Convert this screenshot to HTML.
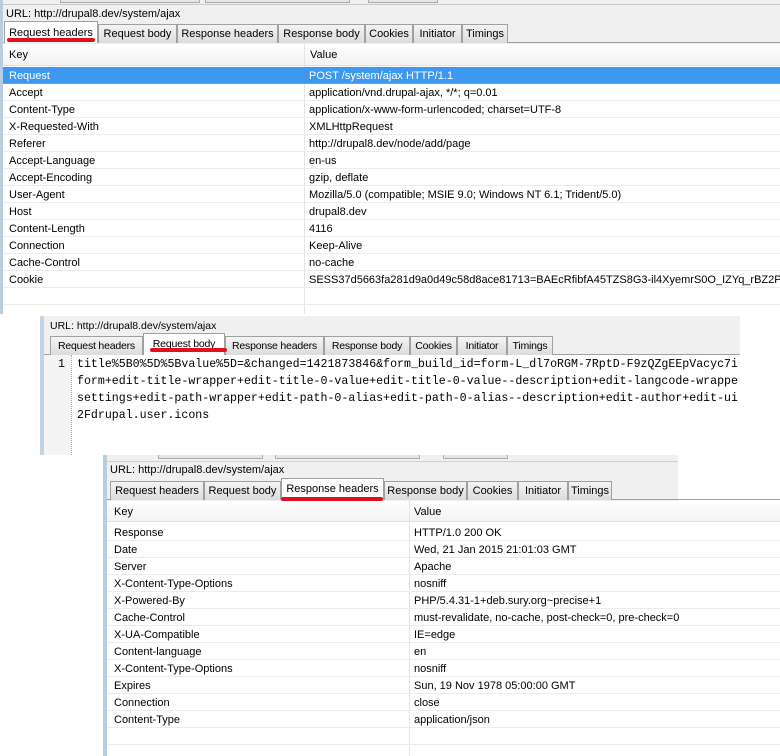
<!DOCTYPE html>
<html><head><meta charset="utf-8">
<style>
*{margin:0;padding:0;box-sizing:border-box}
body{width:780px;height:756px;background:#fff;position:relative;overflow:hidden;font-family:"Liberation Sans",sans-serif;font-size:11px;color:#000}
.a{position:absolute}
.panel{position:absolute;background:#fff;overflow:hidden}
.gray{position:absolute;background:#f0f0f0}
.url{position:absolute;font-size:11px;white-space:nowrap}
.tab{position:absolute;height:19px;border:1px solid #a0a0a0;border-bottom:none;background:linear-gradient(#f4f4f4,#dcdcdc);font-size:11px;line-height:18px;text-align:center;white-space:nowrap;overflow:hidden}
.tab.on{background:#fff;height:22px;border-color:#a0a0a0}
.p2 .tab{font-size:10.5px;letter-spacing:-0.2px}
.red{position:absolute;height:4px;background:#e01020;border-radius:2px}
.hdr{position:absolute;background:linear-gradient(#fff,#f3f3f3);border-bottom:1px solid #e2e2e2}
.row{position:absolute;left:0;right:0;height:17px;border-bottom:1px solid #ececec;line-height:18px;white-space:nowrap}
.row span{position:absolute}
.vl{position:absolute;width:1px;background:#e4e4e4}
.mono{font-family:"Liberation Mono",monospace;font-size:11.6px;line-height:17px;white-space:pre;position:absolute}
</style></head><body>

<!-- Panel 1 -->
<div class="panel" style="left:0;top:0;width:780px;height:314px">
  <div class="gray" style="left:0;top:0;width:780px;height:44px"></div>
  <div class="a" style="left:0;top:0;width:3px;height:314px;background:#b9cde0"></div>
  <div class="a" style="left:60px;top:0;width:140px;height:3px;border:1px solid #aaa;border-top:none;background:#e6e6e6"></div>
  <div class="a" style="left:205px;top:0;width:145px;height:3px;border:1px solid #aaa;border-top:none;background:#e6e6e6"></div>
  <div class="a" style="left:368px;top:0;width:70px;height:3px;border:1px solid #aaa;border-top:none;background:#e6e6e6"></div>
  <div class="a" style="left:0;top:4px;width:780px;height:1px;background:#c8c8c8"></div>
  <div class="url" style="left:6px;top:8px">URL: http://drupal8.dev/system/ajax</div>
  <div class="a" style="left:3px;top:42px;width:777px;height:1px;background:#a0a0a0"></div>
  <div class="tab" style="left:98px;top:24px;width:79px">Request body</div>
  <div class="tab" style="left:177px;top:24px;width:101px">Response headers</div>
  <div class="tab" style="left:278px;top:24px;width:87px">Response body</div>
  <div class="tab" style="left:365px;top:24px;width:48px">Cookies</div>
  <div class="tab" style="left:413px;top:24px;width:49px">Initiator</div>
  <div class="tab" style="left:462px;top:24px;width:46px">Timings</div>
  <div class="tab on" style="left:4px;top:21px;width:94px;line-height:22px">Request headers</div>
  <div class="red" style="left:7px;top:38px;width:88px"></div>
  <div class="hdr" style="left:3px;top:44px;width:777px;height:22px"></div>
  <div class="a" style="left:9px;top:49px">Key</div>
  <div class="a" style="left:310px;top:49px">Value</div>
  <div class="vl" style="left:304px;top:44px;height:270px"></div>
  <div class="a" style="left:3px;top:67px;width:777px;height:248px">
    <div class="row" style="top:0;background:#3d98f0;color:#fff;border-bottom:1px solid #6ab"><span style="left:6px">Request</span><span style="left:306px">POST /system/ajax HTTP/1.1</span></div>
    <div class="row" style="top:17px"><span style="left:6px">Accept</span><span style="left:306px">application/vnd.drupal-ajax, */*; q=0.01</span></div>
    <div class="row" style="top:34px"><span style="left:6px">Content-Type</span><span style="left:306px">application/x-www-form-urlencoded; charset=UTF-8</span></div>
    <div class="row" style="top:51px"><span style="left:6px">X-Requested-With</span><span style="left:306px">XMLHttpRequest</span></div>
    <div class="row" style="top:68px"><span style="left:6px">Referer</span><span style="left:306px">http://drupal8.dev/node/add/page</span></div>
    <div class="row" style="top:85px"><span style="left:6px">Accept-Language</span><span style="left:306px">en-us</span></div>
    <div class="row" style="top:102px"><span style="left:6px">Accept-Encoding</span><span style="left:306px">gzip, deflate</span></div>
    <div class="row" style="top:119px"><span style="left:6px">User-Agent</span><span style="left:306px">Mozilla/5.0 (compatible; MSIE 9.0; Windows NT 6.1; Trident/5.0)</span></div>
    <div class="row" style="top:136px"><span style="left:6px">Host</span><span style="left:306px">drupal8.dev</span></div>
    <div class="row" style="top:153px"><span style="left:6px">Content-Length</span><span style="left:306px">4116</span></div>
    <div class="row" style="top:170px"><span style="left:6px">Connection</span><span style="left:306px">Keep-Alive</span></div>
    <div class="row" style="top:187px"><span style="left:6px">Cache-Control</span><span style="left:306px">no-cache</span></div>
    <div class="row" style="top:204px"><span style="left:6px">Cookie</span><span style="left:306px">SESS37d5663fa281d9a0d49c58d8ace81713=BAEcRfibfA45TZS8G3-il4XyemrS0O_IZYq_rBZ2Pjw</span></div>
    <div class="row" style="top:221px"></div>
  </div>
</div>

<!-- Panel 2 -->
<div class="panel p2" style="left:40px;top:316px;width:700px;height:139px">
  <div class="gray" style="left:0;top:0;width:700px;height:39px"></div>
  <div class="a" style="left:0;top:0;width:4px;height:139px;background:#c3d3e3"></div>
  <div class="url" style="left:10px;top:4px;font-size:10.5px">URL: http://drupal8.dev/system/ajax</div>
  <div class="a" style="left:4px;top:38px;width:696px;height:1px;background:#a0a0a0"></div>
  <div class="tab" style="left:10px;top:20px;width:93px">Request headers</div>
  <div class="tab" style="left:185px;top:20px;width:99px">Response headers</div>
  <div class="tab" style="left:284px;top:20px;width:86px">Response body</div>
  <div class="tab" style="left:370px;top:20px;width:47px">Cookies</div>
  <div class="tab" style="left:417px;top:20px;width:50px">Initiator</div>
  <div class="tab" style="left:467px;top:20px;width:46px">Timings</div>
  <div class="tab on" style="left:103px;top:17px;width:82px;line-height:20px">Request body</div>
  <div class="red" style="left:110px;top:32px;width:77px"></div>
  <div class="a" style="left:4px;top:39px;width:27px;height:100px;background:#f4f4f4"></div>
  <div class="a" style="left:31px;top:39px;width:0;height:100px;border-left:1px dotted #aaa"></div>
  <div class="mono" style="left:18px;top:40px">1</div>
  <div class="mono" style="left:37px;top:40px">title%5B0%5D%5Bvalue%5D=&amp;changed=1421873846&amp;form_build_id=form-L_dl7oRGM-7RptD-F9zQZgEEpVacyc7i
form+edit-title-wrapper+edit-title-0-value+edit-title-0-value--description+edit-langcode-wrappe
settings+edit-path-wrapper+edit-path-0-alias+edit-path-0-alias--description+edit-author+edit-ui
2Fdrupal.user.icons</div>
</div>

<!-- Panel 3 -->
<div class="panel" style="left:103px;top:455px;width:677px;height:301px">
  <div class="gray" style="left:0;top:0;width:575px;height:46px"></div>
  <div class="a" style="left:0;top:0;width:4px;height:301px;background:#b9cde0"></div>
  <div class="a" style="left:55px;top:0;width:105px;height:4px;border:1px solid #aaa;border-top:none;background:#e6e6e6"></div>
  <div class="a" style="left:172px;top:0;width:145px;height:4px;border:1px solid #aaa;border-top:none;background:#e6e6e6"></div>
  <div class="a" style="left:340px;top:0;width:65px;height:4px;border:1px solid #aaa;border-top:none;background:#e6e6e6"></div>
  <div class="a" style="left:4px;top:6px;width:571px;height:1px;background:#d0d0d0"></div>
  <div class="url" style="left:7px;top:9px">URL: http://drupal8.dev/system/ajax</div>
  <div class="a" style="left:4px;top:44px;width:673px;height:1px;background:#a0a0a0"></div>
  <div class="tab" style="left:7px;top:26px;width:94px">Request headers</div>
  <div class="tab" style="left:101px;top:26px;width:77px">Request body</div>
  <div class="tab" style="left:281px;top:26px;width:83px">Response body</div>
  <div class="tab" style="left:364px;top:26px;width:51px">Cookies</div>
  <div class="tab" style="left:415px;top:26px;width:50px">Initiator</div>
  <div class="tab" style="left:465px;top:26px;width:44px">Timings</div>
  <div class="tab on" style="left:178px;top:23px;width:103px;line-height:20px">Response headers</div>
  <div class="red" style="left:178px;top:42px;width:102px"></div>
  <div class="hdr" style="left:4px;top:46px;width:673px;height:21px"></div>
  <div class="a" style="left:11px;top:51px">Key</div>
  <div class="a" style="left:311px;top:51px">Value</div>
  <div class="vl" style="left:306px;top:46px;height:255px"></div>
  <div class="a" style="left:4px;top:69px;width:673px;height:233px">
    <div class="row" style="top:0"><span style="left:7px">Response</span><span style="left:307px">HTTP/1.0 200 OK</span></div>
    <div class="row" style="top:17px"><span style="left:7px">Date</span><span style="left:307px">Wed, 21 Jan 2015 21:01:03 GMT</span></div>
    <div class="row" style="top:34px"><span style="left:7px">Server</span><span style="left:307px">Apache</span></div>
    <div class="row" style="top:51px"><span style="left:7px">X-Content-Type-Options</span><span style="left:307px">nosniff</span></div>
    <div class="row" style="top:68px"><span style="left:7px">X-Powered-By</span><span style="left:307px">PHP/5.4.31-1+deb.sury.org~precise+1</span></div>
    <div class="row" style="top:85px"><span style="left:7px">Cache-Control</span><span style="left:307px">must-revalidate, no-cache, post-check=0, pre-check=0</span></div>
    <div class="row" style="top:102px"><span style="left:7px">X-UA-Compatible</span><span style="left:307px">IE=edge</span></div>
    <div class="row" style="top:119px"><span style="left:7px">Content-language</span><span style="left:307px">en</span></div>
    <div class="row" style="top:136px"><span style="left:7px">X-Content-Type-Options</span><span style="left:307px">nosniff</span></div>
    <div class="row" style="top:153px"><span style="left:7px">Expires</span><span style="left:307px">Sun, 19 Nov 1978 05:00:00 GMT</span></div>
    <div class="row" style="top:170px"><span style="left:7px">Connection</span><span style="left:307px">close</span></div>
    <div class="row" style="top:187px"><span style="left:7px">Content-Type</span><span style="left:307px">application/json</span></div>
    <div class="row" style="top:204px"></div>
  </div>
</div>
</body></html>
